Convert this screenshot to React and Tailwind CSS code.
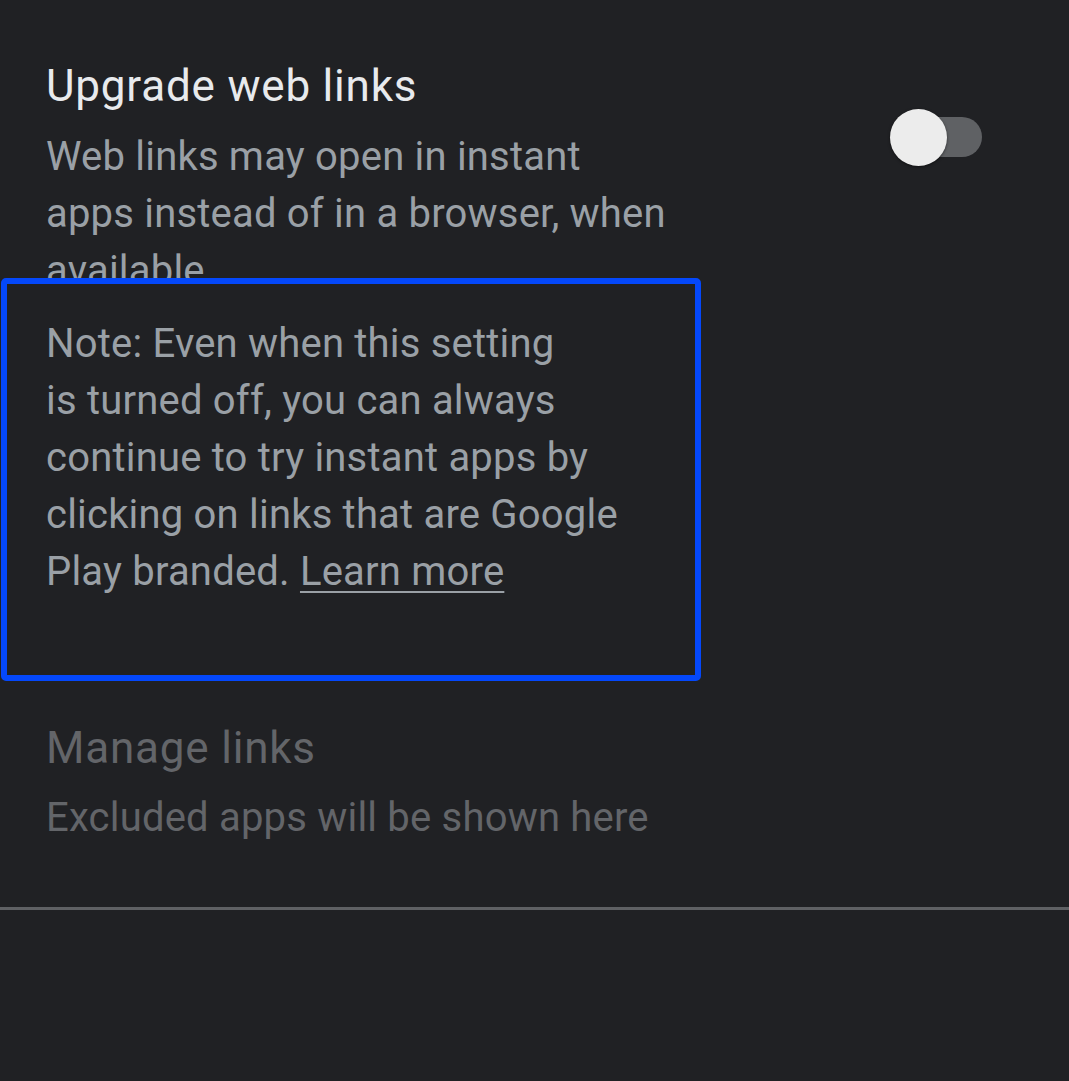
export default function App() {
  return (
    <div
      className="min-h-[1081px] w-full bg-[#202124] pt-[60px]"
      style={{ fontFamily: "Roboto, 'Noto Sans', sans-serif" }}
    >
      <div className="flex items-start justify-between pl-[46px] pr-[87px]">
        <div>
          <h1 className="text-[44px] leading-[52px] tracking-[0.8px] text-[#e8eaed]">
            Upgrade web links
          </h1>
          <p className="mt-[16px] text-[40px] leading-[57px] tracking-[0.2px] text-[#9aa0a6]">
            Web links may open in instant
            <br />
            apps instead of in a browser, when
            <br />
            available.
          </p>
        </div>
        <div className="relative mt-[57px] h-[40px] w-[84px] shrink-0 rounded-full bg-[#5f6164]">
          <div className="absolute -left-[8px] -top-[8px] h-[57px] w-[57px] rounded-full bg-[#ececec] shadow-[0_1px_3px_rgba(0,0,0,0.5)]" />
        </div>
      </div>

      <div className="relative z-10 ml-[1px] -mt-[21px] w-[700px] rounded-[5px] border-[6px] border-[#0448fb] bg-[#202124] pb-[75px] pl-[39px] pt-[31px]">
        <p className="text-[40px] leading-[57px] tracking-[0.2px] text-[#9aa0a6]">
          Note: Even when this setting
          <br />
          is turned off, you can always
          <br />
          continue to try instant apps by
          <br />
          clicking on links that are Google
          <br />
          Play branded.{" "}
          <a href="#" className="underline decoration-2 underline-offset-[6px]">
            Learn more
          </a>
        </p>
      </div>

      <div className="mt-[41px] pl-[46px]">
        <h2 className="text-[44px] leading-[52px] tracking-[0.8px] text-[#636569]">
          Manage links
        </h2>
        <p className="mt-[15px] text-[40px] leading-[57px] tracking-[0.2px] text-[#636569]">
          Excluded apps will be shown here
        </p>
      </div>

      <div className="mt-[61px] h-[3px] w-full bg-[#5f6164]" />
    </div>
  );
}
